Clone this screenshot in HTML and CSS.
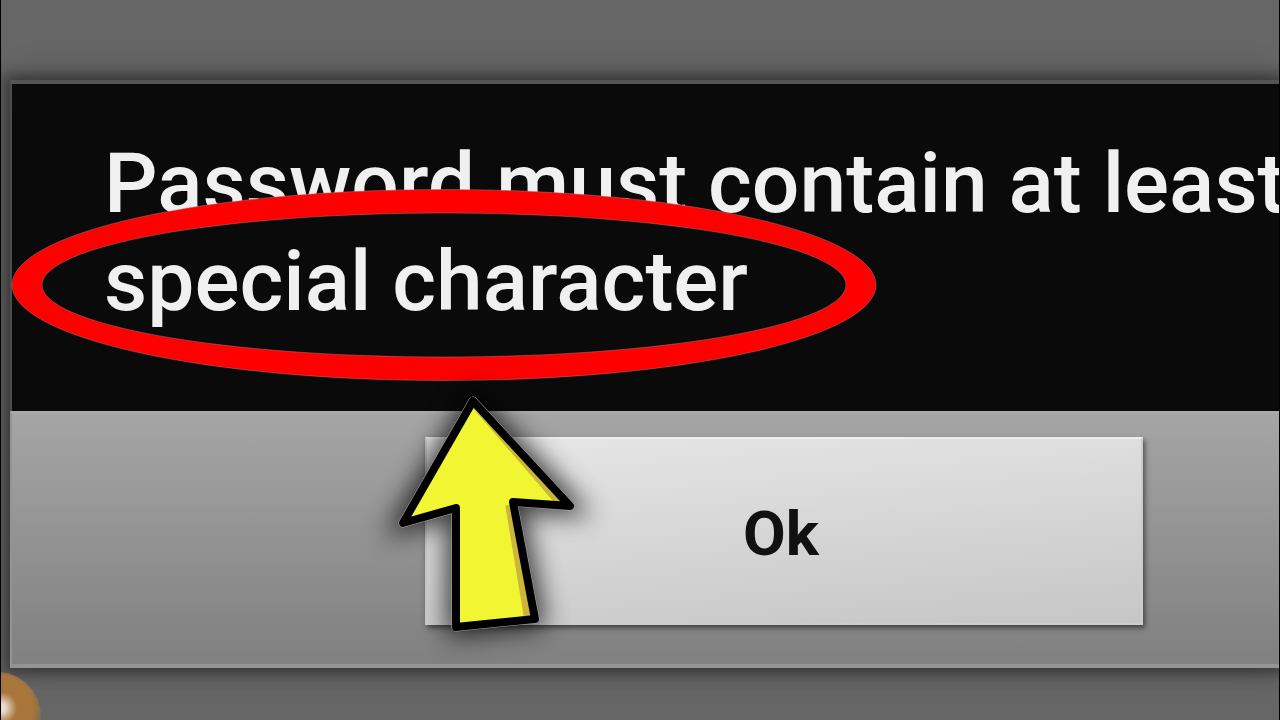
FILE: index.html
```html
<!DOCTYPE html>
<html lang="en">
<head>
<meta charset="utf-8">
<title>Password message</title>
<link rel="stylesheet" href="styles.css">
</head>
<body>
<main class="screen">
  <section class="dialog" role="alertdialog" aria-labelledby="message">
    <div class="dialog-body">
      <p class="message" id="message">Password must contain at least<br>special character</p>
    </div>
    <div class="dialog-footer">
      <button class="ok" type="button">Ok</button>
    </div>
  </section>
  <div class="avatar" aria-hidden="true"></div>
  <svg class="marks" width="1280" height="720" viewBox="0 0 1280 720" aria-hidden="true">
    <defs>
      <filter id="glow" x="-50%" y="-30%" width="200%" height="160%">
        <feGaussianBlur stdDeviation="13"/>
      </filter>
      <clipPath id="arrow-area">
        <path d="M473 401 570 506 513 502 535 619 456 627 456 508 403 523Z"/>
      </clipPath>
    </defs>
    <path fill="#fe0000" stroke="#a77" stroke-width=".5" fill-rule="evenodd" d="M12 285A432 95.500 0 0 1 876 285A432 95.500 0 0 1 12 285ZM42 285A402 72 0 0 0 846 285A402 72 0 0 0 42 285Z"/>
    <path d="M473 401 570 506 513 502 535 619 456 627 456 508 403 523Z" fill="#000" stroke="#000" stroke-width="18" opacity=".75" filter="url(#glow)"/>
    <path d="M473 401 570 506 513 502 535 619 456 627 456 508 403 523Z" stroke="#aaa" stroke-width="9" stroke-linejoin="round"/>
    <g clip-path="url(#arrow-area)">
      <path d="M473 401 570 506 513 502 535 619 456 627 456 508 403 523Z" fill="#c9b63b"/>
      <path d="M465 399 559 508 504 505V498L526 630H440V515L390 530Z" fill="#f2f531"/>
    </g>
    <path d="M473 401 570 506 513 502 535 619 456 627 456 508 403 523Z" fill="none" stroke="#000" stroke-width="8" stroke-linejoin="round"/>
  </svg>
</main>
</body>
</html>
```
FILE: styles.css
```css
* {
  box-sizing: border-box;
}

body {
  margin: 0;
  background: #666;
  font-family: Roboto, "Liberation Sans", sans-serif;
}

.screen {
  position: relative;
  min-height: 100vh;
  padding: 80px 0 50px 9px;
  border: solid #000;
  border-width: 0 1px;
  overflow: hidden;
}

.dialog {
  border-top: 4px solid #555;
  box-shadow: 0 0 12px 6px rgba(0, 0, 0, 0.38), 0 0 36px rgba(0, 0, 0, 0.2);
}

.dialog-body {
  padding: 51px 0 80px 92px;
  border-left: 2px solid #4c4c4c;
  background: #0a0a0a;
}

.message {
  margin: 0;
  color: #f0f0f0;
  font-size: 84px;
  font-weight: 500;
  line-height: 98px;
  white-space: nowrap;
}

.dialog-footer {
  padding: 23px 136px 39px 413px;
  border: solid #949494;
  border-width: 3px 0 4px 2px;
  border-top-color: #aaa;
  background: linear-gradient(#a5a5a5, #808080);
}

.ok {
  display: block;
  width: 100%;
  height: 188px;
  padding: 6px 6px 0 0;
  border: 2px solid #ccc;
  border-top-color: #eee;
  background: linear-gradient(175deg, #e6e6e6, #c6c6c6);
  box-shadow: 2px 3px 5px rgba(0, 0, 0, 0.5);
  color: #111;
  font: 700 62px/72px Roboto, "Liberation Sans", sans-serif;
}

.avatar {
  position: absolute;
  bottom: -40px;
  left: -50px;
  width: 90px;
  height: 88px;
  border-radius: 50%;
  background: radial-gradient(circle at 50px 36px, #eadbd0 4px, #a8763b 16px, #a8763b 32px, rgba(168, 118, 59, 0) 46px);
}

.marks {
  position: absolute;
  top: 0;
  left: -1px;
  pointer-events: none;
}
```
